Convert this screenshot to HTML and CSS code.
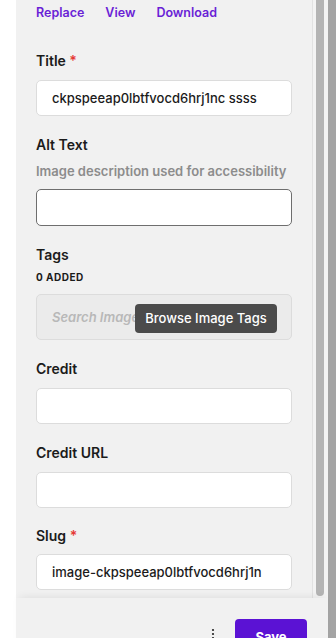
FILE: index.html
```html
<!DOCTYPE html>
<html>
<head>
<meta charset="utf-8">
<link rel="stylesheet" href="styles.css">
</head>
<body>
<div class="gutter"></div>
<div class="drawer">
  <div class="body">
    <div class="content">
      <div class="links">
        <a class="link">Replace</a>
        <a class="link">View</a>
        <a class="link">Download</a>
      </div>

      <div class="field">
        <div class="label">Title <span class="req">*</span></div>
        <div class="input">ckpspeeap0lbtfvocd6hrj1nc ssss</div>
      </div>

      <div class="field">
        <div class="label">Alt Text</div>
        <div class="desc">Image description used for accessibility</div>
        <div class="input focused"></div>
      </div>

      <div class="field">
        <div class="label">Tags</div>
        <div class="count">0 ADDED</div>
        <div class="tagbox">
          <span class="placeholder">Search Image Tags</span>
          <div class="tooltip">Browse Image Tags</div>
        </div>
      </div>

      <div class="field">
        <div class="label">Credit</div>
        <div class="input"></div>
      </div>

      <div class="field">
        <div class="label">Credit URL</div>
        <div class="input"></div>
      </div>

      <div class="field">
        <div class="label slug">Slug <span class="req">*</span></div>
        <div class="input">image-ckpspeeap0lbtfvocd6hrj1n</div>
      </div>
    </div>
    <div class="track"><div class="thumb"></div></div>
  </div>
  <div class="footer">
    <svg class="kebab" width="4" height="12" viewBox="0 0 4 12">
      <circle cx="2" cy="2" r="1.1" fill="#222"/>
      <circle cx="2" cy="6" r="1.1" fill="#222"/>
      <circle cx="2" cy="10" r="1.1" fill="#222"/>
    </svg>
    <button class="save">Save</button>
  </div>
</div>
<div class="pagebar"></div>
</body>
</html>
```

FILE: styles.css
```css
html, body {
  margin: 0;
  padding: 0;
  height: 638px;
  overflow: hidden;
}
body {
  display: flex;
  font-family: Inter, "Noto Sans", sans-serif;
  color: #1b1b1b;
  background: #ffffff;
}
.gutter {
  width: 16px;
  flex: none;
  background: #ffffff;
}
.drawer {
  width: 312px;
  flex: none;
  display: flex;
  flex-direction: column;
  background: #f1f1f1;
}
.body {
  height: 598px;
  flex: none;
  display: flex;
  overflow: hidden;
}
.content {
  width: 256px;
  flex: none;
  padding: 4px 20px 0 20px;
  border-right: 1px solid #e2e2e2;
}
.track {
  width: 15px;
  flex: none;
  background: #f3f3f3;
}
.thumb {
  margin-left: 3px;
  width: 8px;
  height: 600px;
  margin-top: -4px;
  background: #b4b4b4;
  border-radius: 4px;
}
.links {
  display: flex;
  gap: 21px;
  height: 18px;
  line-height: 18px;
  margin-bottom: 30px;
}
.link {
  font-size: 12.5px;
  font-weight: 600;
  color: #6a1fd6;
}
.field {
  margin-bottom: 20px;
}
.label {
  font-size: 14px;
  font-weight: 600;
  line-height: 18px;
  margin-bottom: 10px;
}
.label.slug {
  margin-top: -1px;
  margin-bottom: 9px;
}
.req {
  color: #e53935;
}
.desc {
  font-size: 13px;
  font-weight: 600;
  line-height: 17px;
  color: #8c8c8c;
  margin-top: -1px;
  margin-bottom: 9px;
}
.count {
  font-size: 10px;
  font-weight: 700;
  line-height: 14px;
  letter-spacing: 0.5px;
  margin-top: -4px;
  margin-bottom: 10px;
}
.input {
  box-sizing: border-box;
  height: 36px;
  background: #ffffff;
  border: 1px solid #dcdcdc;
  border-radius: 5px;
  padding: 0 15px;
  font-size: 13px;
  font-weight: 500;
  line-height: 34px;
  white-space: nowrap;
  overflow: hidden;
}
.input.focused {
  height: 37px;
  border-color: #6e6e6e;
}
.tagbox {
  position: relative;
  box-sizing: border-box;
  height: 46px;
  background: #ebebeb;
  border: 1px solid #dcdcdc;
  border-radius: 5px;
  padding: 0 15px;
  line-height: 44px;
  overflow: hidden;
}
.placeholder {
  display: inline-block;
  width: 83px;
  overflow: hidden;
  vertical-align: top;
  font-size: 13px;
  font-weight: 600;
  font-style: italic;
  color: #b8b8b8;
  white-space: nowrap;
}
.tooltip {
  position: absolute;
  left: 98px;
  top: 9px;
  width: 142px;
  height: 29px;
  box-sizing: border-box;
  background: #4b4b4b;
  border-radius: 4px;
  color: #ffffff;
  font-size: 13px;
  font-weight: 500;
  line-height: 29px;
  text-align: center;
}
.footer {
  flex: none;
  display: flex;
  justify-content: flex-end;
  align-items: flex-start;
  padding: 21px 21px 0 0;
  box-shadow: 0 -5px 8px -4px rgba(0, 0, 0, 0.08);
  position: relative;
}
.kebab {
  margin-top: 9px;
  margin-right: 20px;
}
.save {
  width: 72px;
  height: 36px;
  border: none;
  border-radius: 4px;
  background: #5b12d4;
  color: #ffffff;
  font-family: Inter, "Noto Sans", sans-serif;
  font-size: 13px;
  font-weight: 700;
  padding: 0;
}
.pagebar {
  width: 8px;
  flex: none;
  background: #a4a4a4;
}
```
